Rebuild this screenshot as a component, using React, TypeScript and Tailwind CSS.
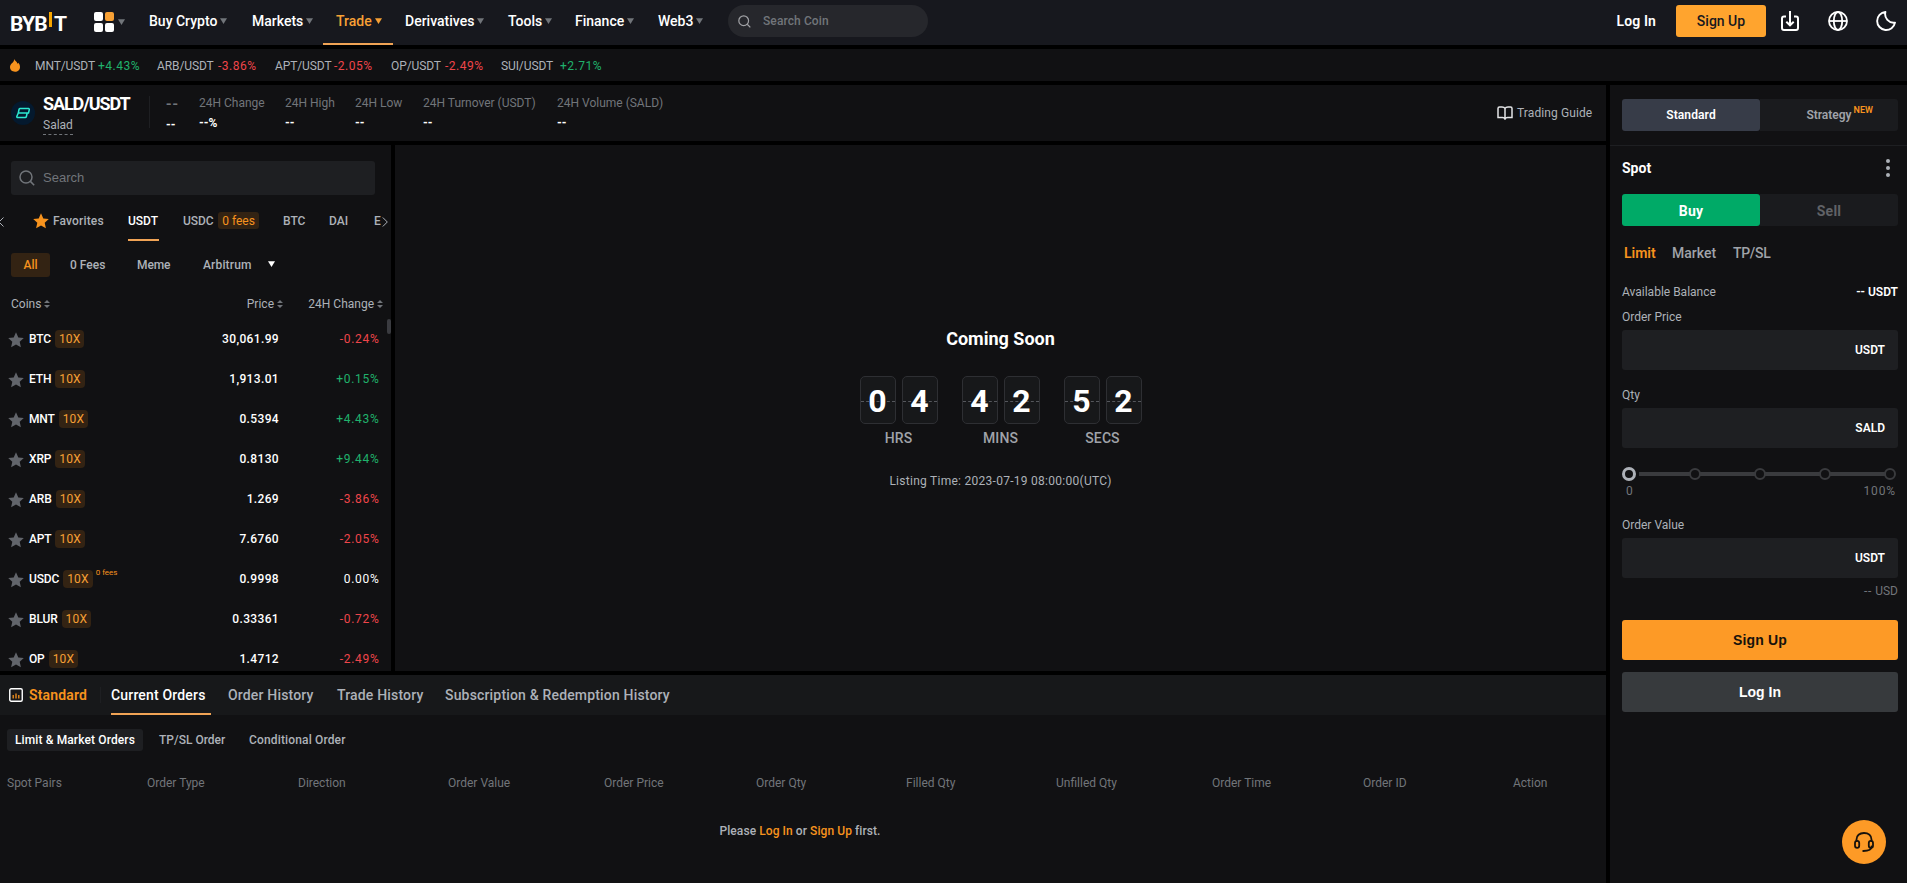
import { useState } from "react";
import type { ReactNode } from "react";

const navItems = [
  { label: "Buy Crypto", width: "w-[103px]" },
  { label: "Markets", width: "w-[84px]" },
  { label: "Trade", width: "w-[69px]", active: true },
  { label: "Derivatives", width: "w-[103px]" },
  { label: "Tools", width: "w-[67px]" },
  { label: "Finance", width: "w-[83px]" },
  { label: "Web3", width: "w-[70px]" },
];

const hotPairs = [
  { pair: "MNT/USDT", change: "+4.43%", width: "w-[122px]", name: "w-[63px]" },
  { pair: "ARB/USDT", change: "-3.86%", width: "w-[118px]", name: "w-[61px]" },
  { pair: "APT/USDT", change: "-2.05%", width: "w-[116px]", name: "w-[59px]" },
  { pair: "OP/USDT", change: "-2.49%", width: "w-[110px]", name: "w-[54px]" },
  { pair: "SUI/USDT", change: "+2.71%", width: "w-[110px]", name: "w-[59px]" },
];

const stats = [
  { label: "24H Change", value: "--%", width: "w-[86px]" },
  { label: "24H High", value: "--", width: "w-[70px]" },
  { label: "24H Low", value: "--", width: "w-[68px]" },
  { label: "24H Turnover (USDT)", value: "--", width: "w-[134px]" },
  { label: "24H Volume (SALD)", value: "--", width: "w-[120px]" },
];

const coins = [
  { name: "BTC", price: "30,061.99", change: "-0.24%" },
  { name: "ETH", price: "1,913.01", change: "+0.15%" },
  { name: "MNT", price: "0.5394", change: "+4.43%" },
  { name: "XRP", price: "0.8130", change: "+9.44%" },
  { name: "ARB", price: "1.269", change: "-3.86%" },
  { name: "APT", price: "7.6760", change: "-2.05%" },
  { name: "USDC", price: "0.9998", change: "0.00%", tag: "0 fees" },
  { name: "BLUR", price: "0.33361", change: "-0.72%" },
  { name: "OP", price: "1.4712", change: "-2.49%" },
];

const countdown = [
  { digits: ["0", "4"], label: "HRS" },
  { digits: ["4", "2"], label: "MINS" },
  { digits: ["5", "2"], label: "SECS" },
];

const orderTabs = [
  { label: "Current Orders", width: "w-[117px]" },
  { label: "Order History", width: "w-[109px]" },
  { label: "Trade History", width: "w-[108px]" },
  { label: "Subscription & Redemption History", width: "w-[240px]" },
];

const orderColumns = [
  { label: "Spot Pairs", width: "w-[140px]" },
  { label: "Order Type", width: "w-[151px]" },
  { label: "Direction", width: "w-[150px]" },
  { label: "Order Value", width: "w-[156px]" },
  { label: "Order Price", width: "w-[152px]" },
  { label: "Order Qty", width: "w-[150px]" },
  { label: "Filled Qty", width: "w-[150px]" },
  { label: "Unfilled Qty", width: "w-[156px]" },
  { label: "Order Time", width: "w-[151px]" },
  { label: "Order ID", width: "w-[150px]" },
  { label: "Action", width: "w-[60px]" },
];

const changeColor = (change: string) => {
  if (change.startsWith("+")) return "text-[#20b26c]";
  if (change.startsWith("-")) return "text-[#ef454a]";
  return "text-white";
};

function Caret({ className = "" }: { className?: string }) {
  return (
    <svg width="7" height="6" viewBox="0 0 7 6" fill="currentColor" className={`shrink-0 ${className}`}>
      <path d="M0 0.2H7L3.5 6Z" />
    </svg>
  );
}

function Star({ className = "" }: { className?: string }) {
  return (
    <svg width="16" height="16" viewBox="0 0 16 16" fill="currentColor" className={`shrink-0 ${className}`}>
      <path d="M8 .3 10.3 5.4 15.8 6 11.7 9.7 12.9 15.2 8 12.4 3.1 15.2 4.3 9.7.2 6 5.7 5.4Z" />
    </svg>
  );
}

function Magnifier({ size, className = "" }: { size: number; className?: string }) {
  return (
    <svg width={size} height={size} viewBox="0 0 16 16" fill="none" stroke="currentColor" strokeWidth="1.5" className={`shrink-0 ${className}`}>
      <circle cx="7" cy="7" r="6" />
      <path d="m11.4 11.4 3.8 3.8" />
    </svg>
  );
}

function SortArrows() {
  return (
    <svg width="6" height="8" viewBox="0 0 6 8" fill="#71757a" className="shrink-0">
      <path d="M3 0 6 3H0ZM0 5H6L3 8Z" />
    </svg>
  );
}

function Badge({ children }: { children: ReactNode }) {
  return <span className="flex h-[18px] items-center rounded-[4px] bg-[#332313] px-1 text-[#f7a035]">{children}</span>;
}

function NavBar() {
  return (
    <header className="flex h-[45px] items-center bg-[#17181e] text-sm font-medium text-white">
      <div className="ml-[10px] flex h-[19px] w-[84px] items-end text-[21px] leading-[16px] font-bold">
        <span className="w-[39px] tracking-[-0.8px]">BYB</span>
        <span className="mr-[2px] mb-[5px] h-[15px] w-[3px] bg-[#f7a600]" />
        <span>T</span>
      </div>
      <div className="mb-[2px] flex w-[55px] items-center">
        <div className="mr-[4px] grid grid-cols-2 gap-[2px]">
          <span className="size-[9px] rounded-[2px] bg-white" />
          <span className="size-[9px] rounded-[2px] bg-[#f7a035]" />
          <span className="size-[9px] rounded-[2px] bg-white" />
          <span className="size-[9px] rounded-[2px] bg-white" />
        </div>
        <Caret className="text-[#71757a]" />
      </div>
      <nav className="flex h-full">
        {navItems.map((item) => (
          <a key={item.label} className={`relative flex h-full items-center gap-[3px] pb-[3px] whitespace-nowrap ${item.width} ${item.active ? "text-[#f7a035]" : ""}`}>
            {item.label}
            <Caret className={item.active ? "mb-px" : "mb-px text-[#71757a]"} />
            {item.active && <span className="absolute bottom-0 -left-[13px] h-[2px] w-[70px] bg-[#f0a355]" />}
          </a>
        ))}
      </nav>
      <div className="mb-[3px] flex h-8 w-[200px] items-center rounded-full bg-[#26272c] pl-[10px] text-xs text-[#71757a]">
        <Magnifier size={13} className="mr-[12px] text-[#a0a1a5]" />
        <span className="tracking-[0.1px]">Search Coin</span>
      </div>
      <div className="mb-[3px] ml-auto flex items-center">
        <a className="mr-[20px] font-semibold tracking-[0.1px]">Log In</a>
        <button className="mr-[15px] h-8 w-[90px] rounded-[3px] bg-[#ffa42e] text-[#17181e]">Sign Up</button>
        <svg width="18" height="20" viewBox="0 0 18 20" fill="none" stroke="white" strokeWidth="2">
          <path d="M5 5.5H3a2 2 0 0 0-2 2V17a2 2 0 0 0 2 2h12a2 2 0 0 0 2-2V7.500a2 2 0 0 0-2-2h-2M9 0v14M5.300 10.800 9 14.300l3.700-3.500" />
        </svg>
        <svg width="20" height="20" viewBox="0 0 20 20" fill="none" stroke="white" strokeWidth="1.8" className="ml-[29px]">
          <circle cx="10" cy="10" r="9" />
          <ellipse cx="10" cy="10" rx="4.200" ry="9" />
          <path d="M1 10h18" />
        </svg>
        <svg width="20" height="20" viewBox="0 0 20 20" fill="none" stroke="white" strokeWidth="1.9" strokeLinejoin="round" className="mr-[11px] ml-[28px]">
          <path d="M9.400 1A9 9 0 1 0 19 11.600 8.600 8.600 0 0 1 9.400 1Z" />
        </svg>
      </div>
    </header>
  );
}

function HotTicker() {
  return (
    <div className="flex h-8 items-center bg-[#111113] pt-px text-xs text-[#adb1b8]">
      <svg width="10" height="13" viewBox="0 0 10 13" className="mr-[15px] ml-[10px]">
        <path d="M4.300 0C4.600 2 7.300 2.600 7.300 4.700l1-.9C9.300 4.900 10 6.300 10 7.900 10 10.800 7.900 12.700 5 12.700S0 10.800 0 8C0 6.500.8 5.300 1.900 4.300 3.100 3.200 4.200 2 4.300 0Z" fill="#f7931e" />
      </svg>
      {hotPairs.map((p) => (
        <div key={p.pair} className={`flex whitespace-nowrap ${p.width}`}>
          <span className={`tracking-[-0.1px] ${p.name}`}>{p.pair}</span>
          <span className={`tracking-[0.500px] ${changeColor(p.change)}`}>{p.change}</span>
        </div>
      ))}
    </div>
  );
}

function PairHeader() {
  return (
    <div className="flex h-14 bg-[#111113] text-xs text-[#71757a]">
      <svg width="24" height="24" viewBox="0 0 24 24" fill="none" stroke="#2be8d0" strokeWidth="1.500" className="mt-4 mr-2 ml-[11px]">
        <circle cx="12" cy="12" r="12" fill="#04192e" stroke="none" />
        <path d="M9 7.500h8.500a1 1 0 0 1 .8 1.200L17.500 12H7.300L8 8.500A1.300 1.300 0 0 1 9 7.500ZM7.300 12h8.900l-.8 3.500a1.300 1.300 0 0 1-1.200 1H6.600a.8.8 0 0 1-.8-1Z" />
      </svg>
      <div className="w-[106px]">
        <div className="mt-2 text-lg leading-[22px] font-bold tracking-[-1.100px] text-white">SALD/USDT</div>
        <div className="mt-px flex">
          <span className="border-b border-dashed border-[#71757a] leading-[18px] text-[#adb1b8]">Salad</span>
        </div>
      </div>
      <div className="mt-[11px] mr-4 h-8 w-px bg-[#1e1f22]" />
      <div className="w-[33px]">
        <div className="mt-[7px] text-base leading-6 font-medium tracking-[1px]">--</div>
        <div className="mt-[1px] leading-[16px] font-bold text-white">--</div>
      </div>
      {stats.map((s) => (
        <div key={s.label} className={`mt-[9px] whitespace-nowrap ${s.width}`}>
          <div className="leading-[18px]">{s.label}</div>
          <div className="mt-[2px] leading-[18px] font-bold text-white">{s.value}</div>
        </div>
      ))}
      <div className="mr-[14px] ml-auto flex items-center gap-1 text-[#adb1b8]">
        <svg width="16" height="14" viewBox="0 0 16 14" fill="none" stroke="#e4e5e7" strokeWidth="1.500">
          <path d="M8 2.500C7.500 1.500 6.500 1 5 1H2.500A1.500 1.500 0 0 0 1 2.500v9h4.500c1.300 0 2.100.4 2.500 1.500.4-1.100 1.200-1.500 2.500-1.500H15v-9A1.500 1.500 0 0 0 13.500 1H11C9.500 1 8.500 1.500 8 2.500ZM8 2.500V13" />
        </svg>
        <span className="w-[75px] tracking-[0.1px] whitespace-nowrap">Trading Guide</span>
      </div>
    </div>
  );
}

function CoinList() {
  return (
    <aside className="relative h-[526px] w-[391px] shrink-0 overflow-hidden bg-[#111113] text-xs">
      <div className="mt-4 ml-[11px] flex h-[34px] w-[364px] items-center rounded-[3px] bg-[#1e1f22] pl-[8px]">
        <Magnifier size={16} className="mr-[8px] text-[#71757a]" />
        <span className="font-['Liberation_Sans',sans-serif] text-[13px] text-[#71757a]">Search</span>
      </div>

      <div className="mt-[10px] flex h-[36px] font-medium whitespace-nowrap text-[#adb1b8]">
        <svg width="4" height="10" viewBox="0 0 4 10" fill="none" stroke="#adb1b8" className="mt-[12px]">
          <path d="M3.500.5-1 5l4.500 4.500" />
        </svg>
        <Star className="mt-[8px] mr-1 ml-[29px] text-[#f7931e]" />
        <span className="w-[75px] leading-8 tracking-[0.150px]">Favorites</span>
        <span className="w-[31px] border-b-2 border-[#f0a355] leading-8 text-white">USDT</span>
        <span className="ml-[24px] w-[35px] leading-8 tracking-[-0.1px]">USDC</span>
        <span className="mt-[7px] w-[65px]">
          <span className="flex h-[17px] w-[41px] items-center justify-center rounded-[3px] bg-[#332313] font-normal text-[#f7931e]">0 fees</span>
        </span>
        <span className="w-[46px] leading-8">BTC</span>
        <span className="w-[45px] leading-8">DAI</span>
        <span className="w-[8px] leading-8">E</span>
        <svg width="6" height="10" viewBox="0 0 6 10" fill="none" stroke="#adb1b8" className="mt-[12px]">
          <path d="m.8.5 4.500 4.500-4.500 4.500" />
        </svg>
      </div>

      <div className="mt-[12px] ml-[11px] flex h-6 items-center font-medium text-[#adb1b8]">
        <span className="mr-5 flex h-6 w-[39px] items-center justify-center rounded-[3px] bg-[#332313] text-[#f7931e]">All</span>
        <span className="w-[67px]">0 Fees</span>
        <span className="w-[66px] tracking-[-0.1px]">Meme</span>
        <span className="w-[65px] tracking-[0.150px]">Arbitrum</span>
        <Caret className="mb-[3px] text-white" />
      </div>

      <div className="mt-[18px] flex h-[18px] items-center text-[#adb1b8]">
        <span className="ml-[11px] flex w-[169px] items-center gap-[3px]">Coins <SortArrows /></span>
        <span className="flex w-[103px] items-center justify-end gap-[3px]">Price <SortArrows /></span>
        <span className="flex w-[100px] items-center justify-end gap-[3px]">24H Change <SortArrows /></span>
      </div>

      <div className="mt-[6px]">
        {coins.map((coin) => (
          <div key={coin.name} className="flex h-10 items-center text-white">
            <Star className="mt-[2px] mr-[5px] ml-2 text-[#62656b]" />
            <span className="mr-1 font-medium tracking-[-0.150px]">{coin.name}</span>
            <span className="tracking-[0.150px]">
              <Badge>10X</Badge>
            </span>
            {coin.tag && <span className="mb-3 ml-[3px] text-[8px] text-[#f7931e]">{coin.tag}</span>}
            <span className="mr-[100px] ml-auto w-0">
              <span className="float-right font-medium tracking-[0.350px]">{coin.price}</span>
            </span>
            <span className="mr-3 w-0">
              <span className={`float-right -mr-[0.500px] tracking-[0.700px] ${changeColor(coin.change)}`}>{coin.change}</span>
            </span>
          </div>
        ))}
      </div>
      <div className="absolute top-[174px] right-0 h-[15px] w-1 rounded-sm bg-[#3a3b40]" />
    </aside>
  );
}

function Countdown() {
  return (
    <section className="ml-1 flex h-[526px] flex-1 flex-col items-center bg-[#111113]">
      <h2 className="mt-[182px] text-lg leading-6 font-bold text-white">Coming Soon</h2>
      <div className="mt-[25px] flex gap-6">
        {countdown.map((unit) => (
          <div key={unit.label} className="flex flex-col items-center">
            <div className="flex gap-[6px]">
              {unit.digits.map((d, i) => (
                <div key={i} className="relative flex h-12 w-9 items-center justify-center rounded-[5px] border border-[#2e2f33] bg-[#17181a] text-[32px] font-bold text-white">
                  <span className="absolute inset-x-0 top-[24px] border-t border-dashed border-[#55575c]" />
                  <span className="relative pt-px">{d}</span>
                </div>
              ))}
            </div>
            <span className="mt-1 text-sm font-medium tracking-[0.1px] text-[#a0a3a9]">{unit.label}</span>
          </div>
        ))}
      </div>
      <p className="mt-[24px] text-xs leading-[18px] tracking-[0.270px] text-[#adb1b8]">Listing Time: 2023-07-19 08:00:00(UTC)</p>
    </section>
  );
}

function Orders() {
  const [tab, setTab] = useState("Current Orders");
  return (
    <section className="mt-1 h-[208px] bg-[#111113] text-xs">
      <div className="flex h-10 items-center bg-[#17181a] text-sm font-medium tracking-[0.170px] whitespace-nowrap text-[#adb1b8]">
        <svg width="14" height="14" viewBox="0 0 14 14" fill="none" className="mr-[6px] ml-[9px]">
          <rect x=".75" y=".75" width="12.500" height="12.500" rx="1.500" stroke="white" strokeWidth="1.400" />
          <path d="M4.200 7v3.500M7 5.500v5M9.800 7v3.500" stroke="#f7931e" strokeWidth="1.300" />
        </svg>
        <span className="w-[71px] font-semibold text-[#f7931e]">Standard</span>
        <span className="mr-[10px] h-4 w-px bg-[#1e1f22]" />
        {orderTabs.map((t) => (
          <button key={t.label} onClick={() => setTab(t.label)} className={`relative h-full text-left ${t.width} ${tab === t.label ? "text-white" : ""}`}>
            {t.label}
            {tab === t.label && <span className="absolute bottom-0 left-0 h-[2px] w-[100px] bg-[#f0a355]" />}
          </button>
        ))}
      </div>
      <div className="mt-[14px] ml-[7px] flex h-[22px] items-center font-medium whitespace-nowrap text-[#adb1b8]">
        <span className="mr-[16px] flex h-[22px] w-[136px] items-center justify-center rounded-[3px] bg-[#1e1f22] tracking-[0.120px] text-white">Limit &amp; Market Orders</span>
        <span className="w-[90px]">TP/SL Order</span>
        <span className="tracking-[0.150px]">Conditional Order</span>
      </div>
      <div className="mt-[23px] flex pl-[7px] leading-[18px] whitespace-nowrap text-[#71757a]">
        {orderColumns.map((c) => (
          <span key={c.label} className={c.width}>{c.label}</span>
        ))}
      </div>
      <p className="mt-[30px] pr-[6px] text-center leading-[18px] font-medium tracking-[0.070px] text-[#adb1b8]">
        Please <a className="text-[#f7931e]">Log In</a> or <a className="text-[#f7931e]">Sign Up</a> first.
      </p>
    </section>
  );
}

function Field({ label, unit, className = "" }: { label: string; unit: string; className?: string }) {
  return (
    <div className={className}>
      <div className="leading-[18px] text-[#adb1b8]">{label}</div>
      <div className="mt-[4px] flex h-10 items-center justify-end rounded-[3px] bg-[#1e1f22] pr-[13px] font-semibold text-white">{unit}</div>
    </div>
  );
}

function TradePanel() {
  return (
    <aside className="ml-1 w-[297px] shrink-0 bg-[#111113] text-xs">
      <div className="flex h-[61px] border-b border-[#1e1f22] pt-[14px] pl-3 font-semibold">
        <div className="flex h-8 w-[138px] items-center justify-center rounded-[3px] bg-[#373c48] tracking-[0.1px] text-white">Standard</div>
        <div className="flex h-8 w-[138px] items-center justify-center rounded-r-[3px] bg-[#1a1b1e] text-[#a0a3a9]">
          <span className="relative">
            Strategy
            <span className="absolute -top-[3px] left-full ml-[2px] text-[9px] leading-3 text-[#f7931e]">NEW</span>
          </span>
        </div>
      </div>
      <div className="pr-[9px] pl-3">
        <div className="mt-[12px] flex h-5 items-center justify-between">
          <span className="text-sm font-bold text-white">Spot</span>
          <svg width="4" height="18" viewBox="0 0 4 18" fill="#adb1b8" className="mr-2">
            <circle cx="2" cy="2" r="2" />
            <circle cx="2" cy="9" r="2" />
            <circle cx="2" cy="16" r="2" />
          </svg>
        </div>
        <div className="mt-4 flex h-8 text-sm font-bold">
          <button className="w-1/2 rounded-[3px] bg-[#00aa67] pt-[2px] tracking-[0.2px] text-white">Buy</button>
          <button className="w-1/2 rounded-r-[3px] bg-[#1a1b1e] pt-[2px] tracking-[0.2px] text-[#606266]">Sell</button>
        </div>
        <div className="mt-[17px] ml-[2px] flex h-5 items-center text-sm font-medium text-[#a0a3a9]">
          <span className="w-12 font-semibold text-[#f7931e]">Limit</span>
          <span className="w-[61px]">Market</span>
          <span className="tracking-[-0.300px]">TP/SL</span>
        </div>
        <div className="mt-[20px] flex justify-between leading-[18px] text-[#adb1b8]">
          <span>Available Balance</span>
          <span className="font-semibold text-white">-- USDT</span>
        </div>
        <Field label="Order Price" unit="USDT" className="mt-[7px]" />
        <Field label="Qty" unit="SALD" className="mt-[16px]" />

        {/* amount slider */}
        <div className="relative mt-[19px] h-[14px]">
          <div className="absolute top-[5px] right-2 left-[17px] h-1 bg-[#3a3b3e]" />
          <div className="absolute inset-x-0 flex h-[14px] items-center">
            <span className="size-[14px] rounded-full border-[3px] border-[#adb1b8] bg-[#111113]" />
            <span className="ml-[53px] size-[12px] rounded-full border-2 border-[#3a3b3e] bg-[#111113]" />
            <span className="ml-[53px] size-[12px] rounded-full border-2 border-[#3a3b3e] bg-[#111113]" />
            <span className="ml-[53px] size-[12px] rounded-full border-2 border-[#3a3b3e] bg-[#111113]" />
            <span className="ml-[53px] size-[12px] rounded-full border-2 border-[#3a3b3e] bg-[#111113]" />
          </div>
        </div>
        <div className="mt-[1px] flex justify-between pr-[2px] pl-1 leading-[18px] text-[#71757a]">
          <span>0</span>
          <span className="tracking-[0.900px]">100%</span>
        </div>
        <Field label="Order Value" unit="USDT" className="mt-[16px]" />
        <div className="mt-1 text-right leading-[18px] text-[#71757a]"><span className="tracking-[0.800px]">--</span> USD</div>
        <button className="mt-5 h-10 w-full rounded-[3px] bg-[#fd9a26] font-['Liberation_Sans',sans-serif] text-sm font-bold tracking-[0.150px] text-[#17120c]">Sign Up</button>
        <button className="mt-3 h-10 w-full rounded-[3px] bg-[#373a3d] font-['Liberation_Sans',sans-serif] text-sm font-bold text-white">Log In</button>
      </div>
    </aside>
  );
}

export default function App() {
  return (
    <div className="relative h-[883px] w-[1907px] overflow-hidden bg-black font-[Roboto,sans-serif]">
      <NavBar />
      <div className="mt-1">
        <HotTicker />
      </div>
      <div className="mt-1 flex h-[798px]">
        <main className="w-[1606px]">
          <PairHeader />
          <div className="mt-1 flex">
            <CoinList />
            <Countdown />
          </div>
          <Orders />
        </main>
        <TradePanel />
      </div>
      <button className="absolute right-[21px] bottom-[19px] flex size-11 items-center justify-center rounded-full bg-[#fd9a26]">
        <svg width="20" height="20" viewBox="0 0 20 20" fill="none" stroke="#17120c" strokeWidth="1.800" strokeLinecap="round">
          <path d="M2.500 9V7.500C2.500 3.500 5.500 1 10 1s7.500 2.500 7.500 6.500V9M17.500 14.500c0 3-3 4.500-8.300 4.500" />
          <rect x="1" y="8.800" width="4.200" height="7" rx="2.100" />
          <rect x="14.800" y="8.800" width="4.200" height="7" rx="2.100" />
        </svg>
      </button>
    </div>
  );
}
